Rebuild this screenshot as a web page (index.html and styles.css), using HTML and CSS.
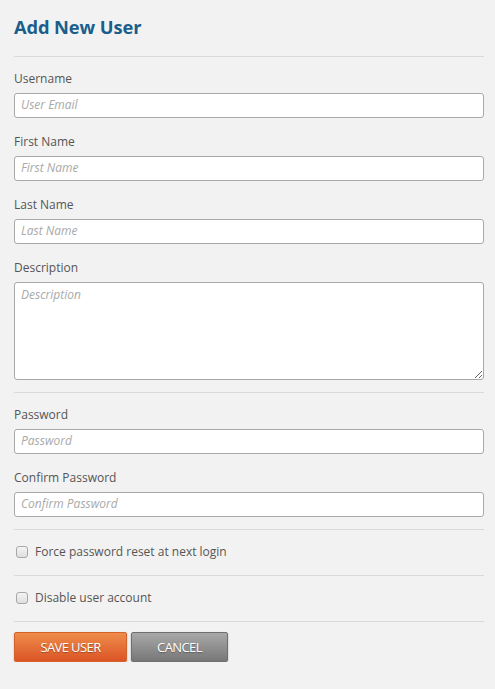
FILE: index.html
```html
<!DOCTYPE html>
<html>
<head>
<meta charset="utf-8">
<link rel="stylesheet" href="styles.css">
</head>
<body>
<div class="page">
  <h1 class="title">Add New User</h1>
  <hr class="rule rule-top">
  <div class="field">
    <label class="label">Username</label>
    <input class="input" type="text" placeholder="User Email">
  </div>
  <div class="field">
    <label class="label">First Name</label>
    <input class="input" type="text" placeholder="First Name">
  </div>
  <div class="field">
    <label class="label">Last Name</label>
    <input class="input" type="text" placeholder="Last Name">
  </div>
  <div class="field">
    <label class="label">Description</label>
    <textarea class="input area" placeholder="Description"></textarea>
  </div>
  <hr class="rule rule-mid">
  <div class="field">
    <label class="label">Password</label>
    <input class="input" type="password" placeholder="Password">
  </div>
  <div class="field">
    <label class="label">Confirm Password</label>
    <input class="input" type="password" placeholder="Confirm Password">
  </div>
  <hr class="rule rule-mid">
  <label class="check"><span class="box"></span>Force password reset at next login</label>
  <hr class="rule rule-check">
  <label class="check"><span class="box"></span>Disable user account</label>
  <hr class="rule rule-check">
  <div class="actions">
    <button class="btn btn-save">SAVE USER</button>
    <button class="btn btn-cancel">CANCEL</button>
  </div>
</div>
</body>
</html>
```
FILE: styles.css
```css
* { box-sizing: border-box; }
html, body { margin: 0; padding: 0; background: #f2f2f2; }
body { font-family: "Open Sans", "Liberation Sans", sans-serif; color: #555; }
.page { padding: 14px 11px 0 14px; width: 495px; }
.title {
  margin: 0;
  font-size: 18.3px;
  font-weight: 700;
  color: #1b5e8c;
  line-height: 26px;
  letter-spacing: -0.1px;
}
.rule {
  border: 0;
  border-top: 1px solid #d9d9d9;
  margin: 15px 0 0 0;
  height: 0;
}
.rule-top { margin-top: 16px; }
.field { margin-top: 16px; }
.rule + .field { margin-top: 14px; }
.label {
  display: block;
  font-size: 12px;
  line-height: 16px;
  color: #555;
  margin-bottom: 6px;
}
.input {
  display: block;
  width: 100%;
  height: 25px;
  border: 1px solid #a9a9a9;
  border-radius: 3px;
  background: #fff;
  padding: 0 6px 2px 6px;
  font-family: "Open Sans", "Liberation Sans", sans-serif;
  font-size: 12px;
  color: #333;
  margin: 0;
  outline: none;
}
.input::placeholder { color: #a9a9a9; font-style: italic; }
.area {
  height: 98px;
  padding: 3px 6px;
  resize: vertical;
}
.rule-mid { margin-top: 12px; }
.rule-check { margin-top: 14px; }
.check {
  display: flex;
  align-items: center;
  margin-top: 13px;
  font-size: 12px;
  line-height: 18px;
  color: #555;
  padding-left: 2px;
}
.box {
  width: 12px;
  height: 12px;
  border: 1px solid #a8a8a8;
  border-radius: 3px;
  background: linear-gradient(#f4f4f4, #dedede);
  margin-right: 7px;
  flex: none;
}
.actions {
  display: flex;
  gap: 4px;
  margin-top: 10px;
}
.btn {
  height: 30px;
  border-radius: 2px;
  color: #fff;
  font-family: "Open Sans", "Liberation Sans", sans-serif;
  font-size: 13px;
  letter-spacing: -0.6px;
  padding: 0;
  box-shadow: 0 1px 2px rgba(0,0,0,0.25);
  text-shadow: 0 1px 1px rgba(0,0,0,0.3);
}
.btn-save {
  width: 113px;
  border: 1px solid #d5612d;
  background: linear-gradient(#ee8c4a, #dc5526);
}
.btn-cancel {
  width: 97px;
  border: 1px solid #6f6f6f;
  background: linear-gradient(#a9a9a9, #777);
}
```
